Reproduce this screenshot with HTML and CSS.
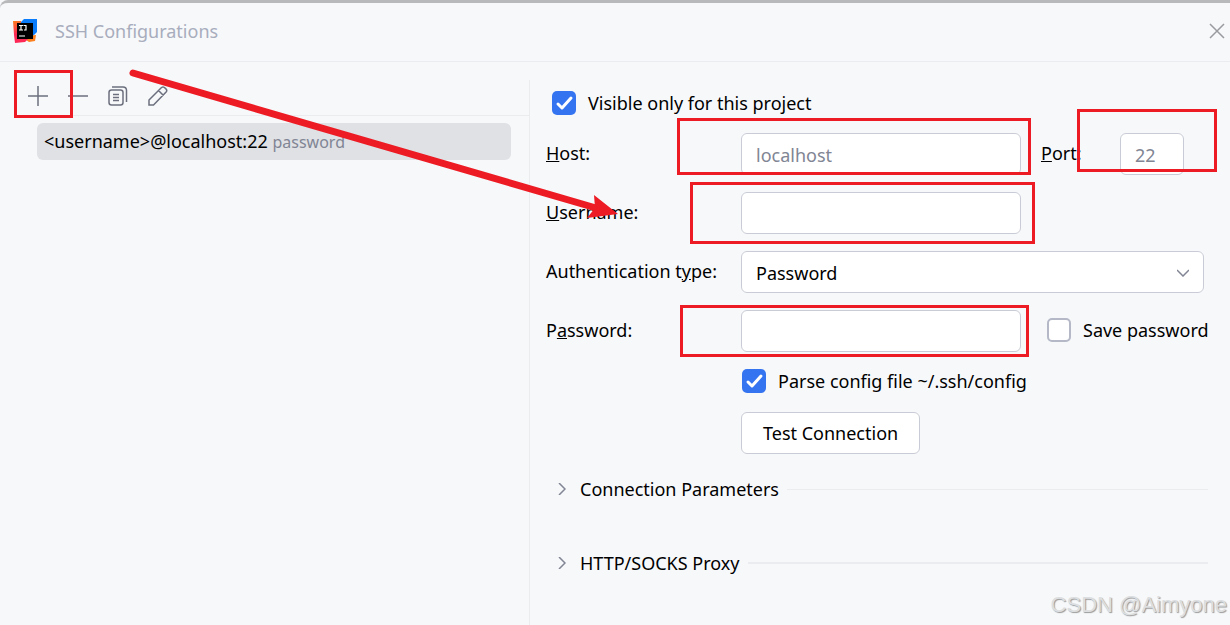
FILE: index.html
```html
<!DOCTYPE html>
<html lang="en">

<head>
    <meta charset="UTF-8">
    <title>SSH Configurations</title>
    <link rel="stylesheet" href="styles.css">
</head>

<body>
    <div class="window">
        <!-- title bar -->
        <header class="titlebar">
            <svg class="logo" viewBox="0 0 24 24" aria-hidden="true">
                <defs>
                    <linearGradient id="warm" x1="0" y1="0" x2="0.3" y2="1">
                        <stop offset="0" stop-color="#fc801d"/>
                        <stop offset="0.6" stop-color="#fe2857"/>
                    </linearGradient>
                </defs>
                <path d="M8 3l3-3h13v13l-5 5H8z" fill="#087cfa"/>
                <path d="M13 17l10-1-1 6-6 1-3-2z" fill="#fc801d"/>
                <path d="M0 2h8v16h9l-5 5-10 1-1-8z" fill="url(#warm)"/>
                <path d="M4 4h16v16H4z" fill="#000"/>
                <path d="M6 6.500h4M8 6.500v4M6 11h4M10.500 6.500h3M13 6.500v4.500h-2M6 17h6" fill="none" stroke="#fff" stroke-width="1.200"/>
            </svg>
            <h1 class="title">SSH Configurations</h1>
            <button class="close" type="button" aria-label="Close">
                <svg width="16" height="16" viewBox="0 0 16 16"><path d="M1 1l14 14M15 1L1 15"/></svg>
            </button>
        </header>

        <main class="panes">
            <!-- list of configurations -->
            <section class="side">
                <div class="toolbar">
                    <button class="tool" type="button" aria-label="Add">
                        <svg viewBox="0 0 20 20"><path d="M10 0v20M0 10h20"/></svg>
                    </button>
                    <button class="tool" type="button" aria-label="Remove">
                        <svg viewBox="0 0 20 20"><path d="M0 10h20"/></svg>
                    </button>
                    <button class="tool" type="button" aria-label="Copy">
                        <svg viewBox="0 0 20 20"><rect x="1" y="4" width="14" height="15" rx="2.500"/><path d="M4 1h11q3.500 0 3.500 3.500V16M5 8.500h6M5 11.500h6M5 14.500h6"/></svg>
                    </button>
                    <button class="tool" type="button" aria-label="Edit">
                        <svg viewBox="0 0 20 20"><path d="M1 19v-5L13.500 1.500q1.500-1.200 3 0l1.600 1.600q1.300 1.500 0 3L5.500 19zM10.500 4.500l5 5"/></svg>
                    </button>
                    <span class="mark mark-add"></span>
                </div>
                <ul class="list">
                    <li class="item">&lt;username&gt;@localhost:22 <small>password</small></li>
                </ul>
            </section>

            <!-- settings of the selected configuration -->
            <form class="form">
                <label class="check check-visible"><input type="checkbox" checked>Visible only for this project</label>

                <div class="grid">
                    <label class="name" for="host"><u>H</u>ost:</label>
                    <div class="field">
                        <input id="host" class="text" type="text" placeholder="localhost">
                        <span class="mark mark-host"></span>
                    </div>
                    <div class="extra">
                        <label class="name port-label" for="port"><u>P</u>ort:</label>
                        <div class="field port">
                            <input id="port" class="text" type="text" placeholder="22">
                            <span class="mark mark-port"></span>
                        </div>
                    </div>

                    <label class="name" for="user"><u>U</u>sername:</label>
                    <div class="field">
                        <input id="user" class="text" type="text">
                        <span class="mark mark-user"></span>
                    </div>

                    <label class="name name-auth" for="auth">Authentication t<u>y</u>pe:</label>
                    <div class="field field-auth">
                        <select id="auth" class="text">
                            <option>Password</option>
                            <option>Key pair</option>
                            <option>OpenSSH config and authentication agent</option>
                        </select>
                        <svg class="arrow-down" width="12" height="8" viewBox="0 0 12 8"><path d="M0 1l6 6 6-6"/></svg>
                    </div>

                    <label class="name" for="pass">P<u>a</u>ssword:</label>
                    <div class="field">
                        <input id="pass" class="text" type="password">
                        <span class="mark mark-pass"></span>
                    </div>
                    <div class="extra">
                        <label class="name check check-save"><input type="checkbox">Save password</label>
                    </div>
                </div>

                <div class="actions">
                    <label class="check"><input type="checkbox" checked>Parse config file ~/.ssh/config</label>
                    <button class="btn" type="button">Test Connection</button>
                </div>

                <button class="fold" type="button">
                    <svg width="8" height="12" viewBox="0 0 8 12"><path d="M1 0l6 6-6 6"/></svg>
                    <span>Connection Parameters</span>
                </button>
                <button class="fold fold-proxy" type="button">
                    <svg width="8" height="12" viewBox="0 0 8 12"><path d="M1 0l6 6-6 6"/></svg>
                    <span>HTTP/SOCKS Proxy</span>
                </button>
            </form>
        </main>

        <svg class="pointer" width="500" height="160" viewBox="0 0 500 160" aria-hidden="true">
            <path d="M9 10L472 145" fill="none" stroke="#ed1c24" stroke-width="7" stroke-linecap="round"/>
            <path d="M470 132l24 19-31 4 8-10z" fill="#ed1c24"/>
        </svg>
        <span class="watermark">CSDN @Aimyone</span>
    </div>
</body>

</html>
```

FILE: styles.css
```css
* {
    box-sizing: border-box;
}

body,
h1,
ul {
    margin: 0;
    padding: 0;
}

body {
    background: #f7f8fa;
    color: #000;
    font: 18px/24px "Noto Sans", "Open Sans", sans-serif;
}

button,
input,
select {
    font: inherit;
    color: inherit;
}

button {
    padding: 0;
    border: 0;
    background: none;
}

svg {
    display: block;
}

.window {
    position: relative;
    display: flex;
    flex-direction: column;
    min-height: 100vh;
    overflow: hidden;
    border-top: 3px solid #b7b9bb;
    border-radius: 8px 0 0 0;
}

/* title bar */
.titlebar {
    display: flex;
    align-items: center;
    height: 59px;
    padding: 0 5px 2px 13px;
    border-bottom: 1px solid #ebecf0;
}

.logo {
    width: 24px;
    height: 24px;
}

.title {
    flex: 1;
    margin-left: 18px;
    color: #a8adbd;
    font-size: 18px;
    font-weight: normal;
}

.close svg {
    fill: none;
    stroke: #999b9e;
    stroke-width: 1.5;
}

.panes {
    display: flex;
    flex: 1;
    padding-top: 18px;
}

/* left side */
.side {
    flex: 0 0 530px;
    border-right: 1px solid #ebecf0;
}

.toolbar {
    position: relative;
    display: flex;
    gap: 20px;
    height: 36px;
    margin-left: 28px;
    padding-top: 6px;
    border-bottom: 1px solid #ebecf0;
}

.tool {
    width: 20px;
    height: 20px;
}

.tool svg {
    width: 20px;
    height: 20px;
    fill: none;
    stroke: #6c707e;
    stroke-width: 1.5;
}

.list {
    padding: 7px 18px 0 37px;
    list-style: none;
}

.item {
    padding: 6px 7px;
    border-radius: 6px;
    background: #dfe1e5;
}

.item small {
    color: #818594;
    font-size: 16px;
}

/* form */
.form {
    flex: 1;
    padding: 11px 22px 0 16px;
}

.check {
    display: flex;
    align-items: center;
    gap: 12px;
    white-space: nowrap;
}

.check-visible {
    margin: 0 0 18px 6px;
}

.check input {
    flex: none;
    width: 24px;
    height: 24px;
    margin: 0;
    border: 2px solid #b4b8c7;
    border-radius: 5px;
    background: #fff;
    appearance: none;
}

.check input:checked {
    border: 0;
    background: #3574f0 url("data:image/svg+xml,%3Csvg xmlns='http://www.w3.org/2000/svg' viewBox='0 0 24 24'%3E%3Cpath d='M6 13l4 4 9-10' fill='none' stroke='white' stroke-width='3' stroke-linecap='round' stroke-linejoin='round'/%3E%3C/svg%3E");
}

.grid {
    display: grid;
    grid-template-columns: 195px 1fr 187px;
    row-gap: 17px;
    align-items: center;
}

.name {
    padding-bottom: 3px;
}

.name-auth {
    grid-column: 1;
}

.field {
    position: relative;
}

.field-auth {
    grid-column: 2 / 4;
    margin-right: 4px;
}

.text {
    display: block;
    width: 100%;
    height: 42px;
    padding: 1px 14px 0;
    border: 1px solid #c9ccd6;
    border-radius: 6px;
    background: #fff;
    appearance: none;
}

.text::placeholder {
    color: #818594;
}

.arrow-down {
    position: absolute;
    top: 18px;
    right: 15px;
    fill: none;
    stroke: #818594;
    stroke-width: 1.5;
    pointer-events: none;
}

.extra {
    display: flex;
    align-items: center;
    padding-left: 20px;
}

.port-label {
    width: 79px;
}

.port {
    width: 64px;
}

.check-save {
    padding-left: 6px;
}

.actions {
    display: flex;
    flex-direction: column;
    align-items: flex-start;
    gap: 19px;
    margin: 17px 0 23px 195px;
}

.actions .check {
    padding-left: 1px;
}

.btn {
    height: 42px;
    padding: 0 21px;
    border: 1px solid #c9ccd6;
    border-radius: 6px;
    background: #fff;
}

.fold {
    display: flex;
    align-items: center;
    gap: 14px;
    width: 100%;
    padding-left: 12px;
}

.fold-proxy {
    margin-top: 50px;
}

.fold svg {
    fill: none;
    stroke: #818594;
    stroke-width: 1.5;
}

.fold::after {
    content: "";
    flex: 1;
    height: 1px;
    margin-left: -6px;
    background: #ebecf0;
}

.fold-proxy::after {
    height: 2px;
}

/* red marks over the controls */
.mark {
    position: absolute;
    border: 3px solid #ed1c24;
    pointer-events: none;
}

.mark-add {
    inset: -10px auto auto -14px;
    width: 59px;
    height: 48px;
}

.mark-host {
    inset: -15px -10px 0 -64px;
}

.mark-port {
    inset: -24px -33px 3px -43px;
}

.mark-user {
    inset: -10px -14px -10px -51px;
}

.mark-pass {
    inset: -5px -8px -5px -61px;
}

.pointer {
    position: absolute;
    top: 60px;
    left: 124px;
    pointer-events: none;
}

.watermark {
    position: absolute;
    right: 3px;
    bottom: 7px;
    color: #dcdee0;
    font: 22px/26px "Liberation Sans", sans-serif;
    text-shadow: 1px 1px 1px #999;
}
```
